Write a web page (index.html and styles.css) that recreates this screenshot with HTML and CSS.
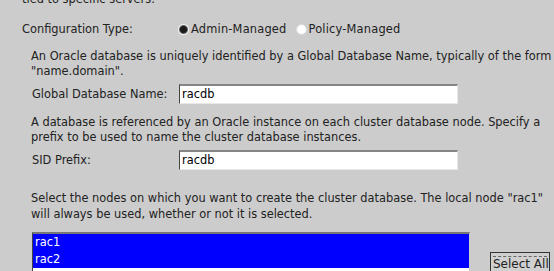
FILE: index.html
```html
<!DOCTYPE html>
<html>
<head>
<meta charset="utf-8">
<link rel="stylesheet" href="styles.css">
</head>
<body>
<div class="page">
  <div class="cut">tied to specific servers.</div>
  <div class="row config">
    <span class="label">Configuration Type:</span>
    <span class="radio on"></span><span class="opt">Admin-Managed</span>
    <span class="radio off"></span><span class="opt">Policy-Managed</span>
  </div>
  <div class="section">
    <p class="para first">An Oracle database is uniquely identified by a Global Database Name, typically of the form<br>"name.domain".</p>
    <div class="row field-row">
      <span class="label2">Global Database Name:</span>
      <div class="field">racdb</div>
    </div>
    <p class="para">A database is referenced by an Oracle instance on each cluster database node. Specify a<br>prefix to be used to name the cluster database instances.</p>
    <div class="row field-row">
      <span class="label2">SID Prefix:</span>
      <div class="field">racdb</div>
    </div>
    <p class="para p3">Select the nodes on which you want to create the cluster database. The local node "rac1"<br>will always be used, whether or not it is selected.</p>
    <div class="nodes">
      <div class="list">
        <div class="item sel">rac1</div>
        <div class="item sel">rac2</div>
      </div>
      <button class="btn"><span class="focus">Select All</span></button>
    </div>
  </div>
</div>
</body>
</html>
```
FILE: styles.css
```css
html, body {
  margin: 0;
  padding: 0;
  background: #cccccc;
  overflow: hidden;
}
body {
  font-family: "DejaVu Sans", sans-serif;
  font-size: 11.4px;
  color: #222;
  width: 554px;
  height: 271px;
  white-space: nowrap;
}
.page {
  padding-left: 22px;
}
.cut {
  line-height: 15px;
  margin-top: -8px;
  height: 15px;
}
.row {
  display: flex;
  align-items: center;
}
.config {
  margin-top: 14px;
  height: 16px;
}
.label {
  width: 156px;
  flex: none;
}
.radio {
  width: 11px;
  height: 11px;
  border-radius: 50%;
  box-sizing: border-box;
  margin-right: 2px;
  flex: none;
}
.radio.on {
  background: radial-gradient(circle, #1a1a1a 0 3px, #3a3a3a 3.5px, #777 4.2px, #f2f2f2 4.8px);
}
.radio.off {
  background: #fff;
  border: 1px solid #d8d8d8;
  margin-left: 9px;
}
.opt {
  letter-spacing: 0.2px;
}
.section {
  padding-left: 9px;
}
.para {
  margin: 0;
  line-height: 15px;
}
.para.first {
  margin-top: 12px;
}
.field-row {
  margin-top: 5px;
  margin-bottom: 11px;
  height: 20px;
}
.label2 {
  width: 147px;
  padding-left: 1px;
  flex: none;
}
.field {
  width: 279px;
  height: 20px;
  box-sizing: border-box;
  background: #fff;
  border-top: 2px solid #858585;
  border-left: 1px solid #444;
  border-right: 1px solid #e8e8e8;
  border-bottom: 1px solid #e8e8e8;
  padding-left: 2px;
  line-height: 17px;
  color: #000;
  flex: none;
}
.para.p3 {
  margin-top: 20px;
  line-height: 16px;
}
.nodes {
  display: flex;
  align-items: flex-start;
  margin-top: 10px;
  margin-left: 1px;
}
.list {
  width: 438px;
  height: 60px;
  box-sizing: border-box;
  background: #fff;
  border-top: 2px solid #777;
  border-left: 1px solid #444;
  border-right: 1px solid #ccc;
  flex: none;
}
.item {
  height: 17px;
  line-height: 17px;
  padding-left: 2px;
  color: #fff;
}
.item.sel {
  background: #0000ff;
}
.btn {
  margin-left: 20px;
  margin-top: 20px;
  width: 60px;
  height: 24px;
  padding: 1px 2px;
  font-family: inherit;
  font-size: 12px;
  color: #222;
  background: #d0d0d0;
  border: 1px solid #333;
  border-radius: 0;
  flex: none;
  text-align: left;
  align-self: flex-start;
}
.btn .focus {
  display: block;
  border-top: 1px dashed #666;
  padding-top: 0;
  line-height: 15px;
}
```
